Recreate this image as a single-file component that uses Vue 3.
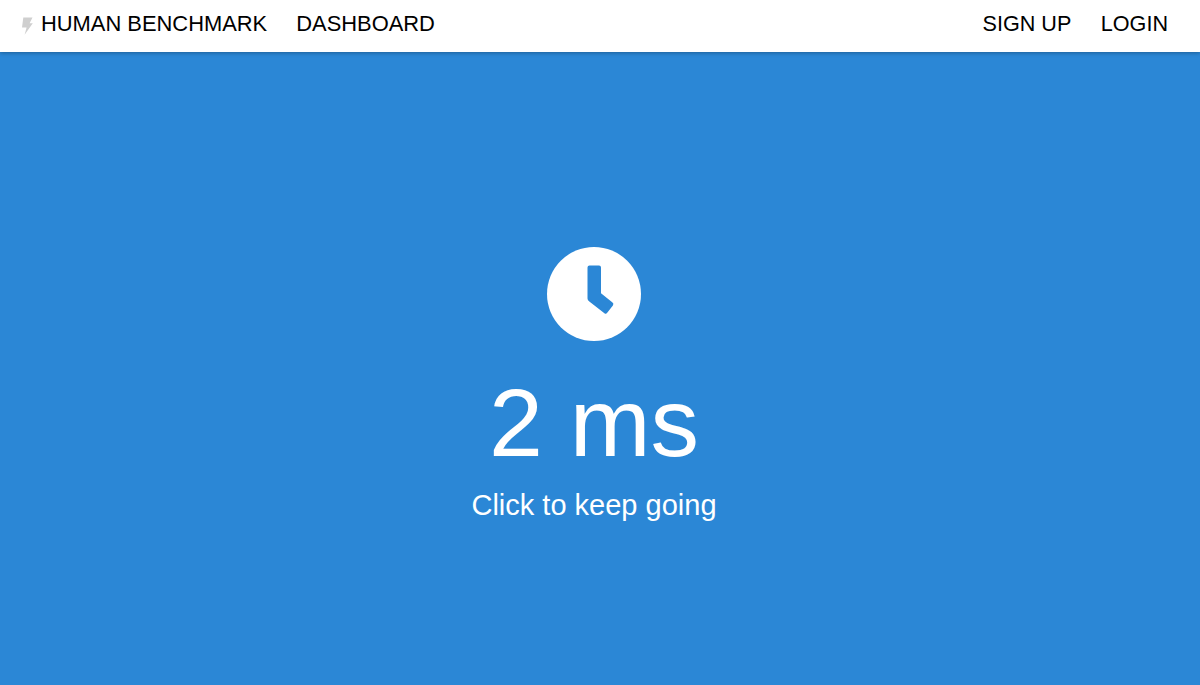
<script setup>
const left = ['HUMAN BENCHMARK', 'DASHBOARD']
const right = ['SIGN UP', 'LOGIN']
</script>

<template>
  <div class="page">
    <nav class="nav">
      <div class="group primary">
        <svg class="bolt" width="12" height="18" viewBox="0 0 12 18">
          <path d="M2.300 0.500h9.200L8.600 6.200h3.200L3.600 17.800l2-7.200H1z" fill="#cfcfcf" />
        </svg>
        <a class="brand">{{ left[0] }}</a>
        <a class="link">{{ left[1] }}</a>
      </div>
      <div class="group right">
        <a v-for="r in right" :key="r" class="link">{{ r }}</a>
      </div>
    </nav>
    <main class="main">
      <svg class="clock" width="94" height="94" viewBox="0 0 94 94">
        <circle cx="47" cy="47" r="47" fill="#fff" />
        <path d="M40.500 20.500a2 2 0 0 1 2-2h9.500a2 2 0 0 1 2 2v25.800l11.500 9.300a2 2 0 0 1 .4 2.800l-5.700 7.400a2 2 0 0 1-2.800.4L42 54.200a3.500 3.500 0 0 1-1.500-2.800z" fill="#2b87d6" />
      </svg>
      <div class="time">2 ms</div>
      <div class="hint">Click to keep going</div>
    </main>
  </div>
</template>

<style>
html, body { margin: 0; height: 100%; }
</style>

<style scoped>
.page {
  width: 1200px;
  height: 685px;
  display: flex;
  flex-direction: column;
  overflow: hidden;
  background: #2b87d6;
  font-family: "Liberation Sans", Arial, sans-serif;
}
.nav {
  height: 52px;
  box-sizing: border-box;
  flex: none;
  background: #fff;
  display: flex;
  justify-content: space-between;
  align-items: center;
  padding: 0 32px 4px 20px;
  box-shadow: 0 1px 4px rgba(0, 0, 0, 0.3);
  position: relative;
  color: #000;
  font-size: 21.6px;
}
.group { display: flex; align-items: center; }
.primary { font-size: 21.9px; }
.bolt { margin-right: 8px; margin-top: 4px; margin-left: 1px; }
.brand { margin-right: 29px; }
.right { gap: 29.500px; }
.main {
  flex: 1;
  display: flex;
  flex-direction: column;
  align-items: center;
  justify-content: flex-start;
  padding-top: 195px;
  padding-right: 12px;
  color: #fff;
}
.clock { display: block; }
.time { font-size: 97px; line-height: 110px; margin-top: 27px; }
.hint { font-size: 29px; line-height: 34px; margin-top: 10px; }
</style>
